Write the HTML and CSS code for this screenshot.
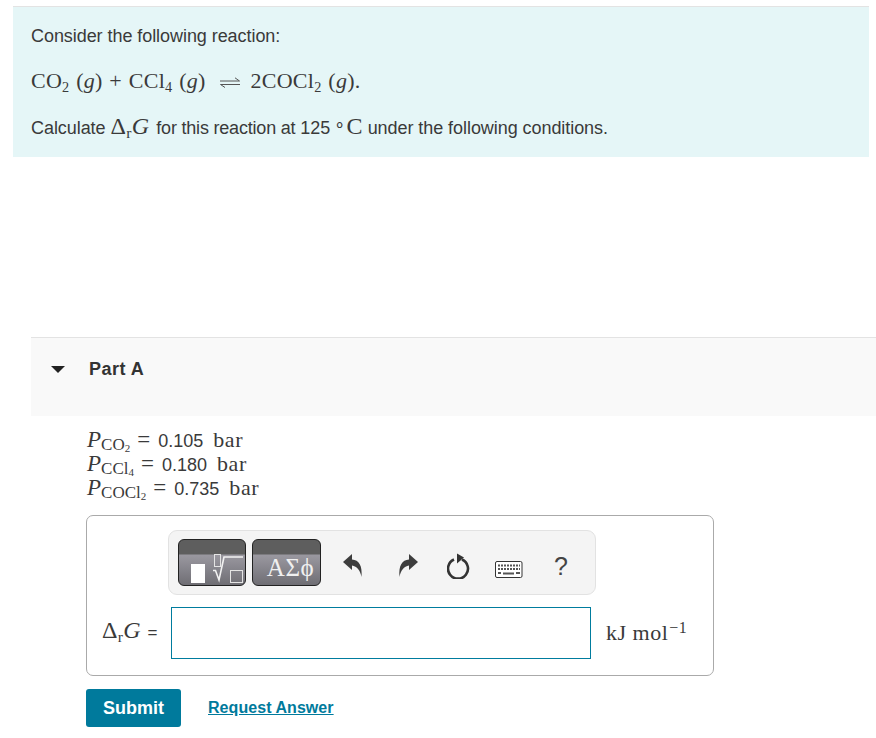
FILE: index.html
```html
<!DOCTYPE html>
<html lang="en">
<head>
<meta charset="utf-8">
<title>Part A</title>
<link rel="stylesheet" href="styles.css">
</head>
<body>
<div class="page">
  <section class="intro">
    <p class="line first">Consider the following reaction:</p>
    <p class="line eq"><span class="m">CO<sub>2</sub> (<i>g</i>) + CCl<sub>4</sub> (<i>g</i>)</span>
      <svg class="equil" width="20" height="11" viewBox="0 0 20 11"><path d="M0 4H19.500L15 .8M20 7.500H.5L5 10.500" fill="none" stroke="#555" stroke-width="1"/></svg>
      <span class="m">2COCl<sub>2</sub> (<i>g</i>).</span></p>
    <p class="line">Calculate <span class="m big delta">Δ<sub>r</sub><i>G</i></span> <span class="tight">for this reaction at</span> 125 <span class="m big"><sup class="deg">∘</sup>C</span> under the following conditions.</p>
  </section>

  <section class="part">
    <header class="part-head">
      <span class="caret"></span>
      <h2>Part A</h2>
    </header>
    <div class="given">
      <div><span class="m p"><i>P</i><sub>CO<sub>2</sub></sub></span> <span class="m eqs">=</span> 0.105 <span class="m unit">bar</span></div>
      <div><span class="m p"><i>P</i><sub>CCl<sub>4</sub></sub></span> <span class="m eqs">=</span> 0.180 <span class="m unit">bar</span></div>
      <div><span class="m p"><i>P</i><sub>COCl<sub>2</sub></sub></span> <span class="m eqs">=</span> 0.735 <span class="m unit">bar</span></div>
    </div>

    <div class="answer">
      <div class="toolbar">
        <button class="tool tool-a" aria-label="Templates">
          <svg width="66" height="32" viewBox="0 0 66 32">
            <rect x="11" y="11" width="14" height="19" fill="#fff"/>
            <rect x="34.500" y="1.500" width="6" height="12" fill="none" stroke="#e4e4e4"/>
            <path d="M33 17.500h2.500l3.500 9.500 5-23h19" fill="none" stroke="#f2f2f2" stroke-width="1.600"/>
            <rect x="50.500" y="17.500" width="12" height="12" fill="none" stroke="#e4e4e4"/>
          </svg>
        </button>
        <button class="tool tool-b"><span class="greek">ΑΣϕ</span></button>
        <svg class="ico undo" width="20" height="24" viewBox="0 0 20 24"><path d="M0 8 9 0v5.500c7 .5 10.500 6 9.500 17.500C17.500 17 14 12 9 11.500V16Z" fill="#3d3d3d"/></svg>
        <svg class="ico redo" width="20" height="24" viewBox="0 0 20 24"><path d="M20 8 11 0v5.500C4 6 .5 11.500 1.500 23 2.500 17 6 12 11 11.500V16Z" fill="#3d3d3d"/></svg>
        <svg class="ico reload" width="24" height="26" viewBox="0 0 24 26"><path d="M7 6.500a10 10 0 1 0 8 0" fill="none" stroke="#333" stroke-width="2.600"/><path d="M9 0v10l7-6z" fill="#333" transform="translate(1 .5)"/></svg>
        <svg class="ico kbd" width="28" height="18" viewBox="0 0 28 18"><rect x=".5" y=".5" width="26.500" height="16" rx="1.500" fill="#fff" stroke="#333"/><path d="M3 4.500h22M3 8h22" stroke="#555" stroke-width="2" stroke-dasharray="2 1"/><path d="M3 12h3M8 12.500h11M21 12h4" stroke="#555" stroke-width="2"/></svg>
        <span class="help">?</span>
      </div>
      <div class="entry">
        <label class="entry-label"><span class="m big delta">Δ<sub>r</sub><i>G</i></span> =</label>
        <div class="field"></div>
        <span class="m units">kJ mol<sup>−1</sup></span>
      </div>
    </div>

    <div class="actions">
      <button class="submit">Submit</button>
      <a class="request" href="#">Request Answer</a>
    </div>
  </section>
</div>
</body>
</html>
```

FILE: styles.css
```css
* { box-sizing: border-box; }
html, body { margin: 0; padding: 0; background: #fff; }
body {
  width: 876px;
  height: 738px;
  overflow: hidden;
  font-family: "Liberation Sans", Arial, sans-serif;
  font-size: 18px;
  color: #3a3a3a;
}
.page { padding: 6px 0 0 13px; }
.m { font-family: "Liberation Serif", "Times New Roman", serif; }
.intro {
  width: 856px;
  height: 151px;
  border-top: 1px solid #e3e3e3;
  background: #e5f6f7;
  padding: 17px 18px 0;
}
.line { margin: 0; height: 24px; line-height: 24px; white-space: nowrap; letter-spacing: -0.06px; }
.eq { margin-top: 21px; font-size: 22px; display: flex; align-items: center; letter-spacing: 0; }
.eq .m { letter-spacing: .25px; word-spacing: 1px; }
.eq .equil { margin: 3px 11px 0 14px; }
.eq + .line { margin-top: 23px; }
sub { font-size: 65%; line-height: 0; vertical-align: -0.25em; }
sup { font-size: 65%; line-height: 0; vertical-align: 0.6em; }
.big { font-size: 24px; letter-spacing: .3px; line-height: 0; }
.delta { margin-right: 2px; }
.tight { letter-spacing: -0.2px; }
.deg { font-size: 18px; vertical-align: 0.25em; margin-right: 1px; margin-left: -1px; }

.part { margin: 180px 0 0 18px; }
.part-head {
  height: 79px;
  border-top: 1px solid #e3e3e3;
  background: #f9f9f9;
  display: flex;
  padding: 19px 0 0 20px;
  gap: 24px;
}
.caret {
  width: 0;
  height: 0;
  margin-top: 9px;
  border-left: 7px solid transparent;
  border-right: 7px solid transparent;
  border-top: 7px solid #222;
}
.part-head h2 { margin: 0; font-size: 18px; line-height: 24px; font-weight: bold; color: #333; letter-spacing: .5px; }

.given { margin: 12px 0 0 56px; font-size: 18px; line-height: 24px; }
.given div { height: 24px; white-space: nowrap; }
.p { font-size: 23px; }
.p sub { font-size: 17px; vertical-align: -0.2em; }
.p sub sub { font-size: 11px; }
.eqs { font-size: 23px; margin: 0 3px 0 2px; }
.unit { font-size: 22px; margin-left: 5px; letter-spacing: .6px; }

.answer {
  width: 628px;
  height: 161px;
  margin: 15px 0 0 55px;
  border: 1px solid #aaa;
  border-radius: 7px;
  padding: 14px 0 0 81px;
}
.toolbar {
  width: 428px;
  height: 65px;
  background: #f4f4f4;
  border: 1px solid #e2e2e2;
  border-radius: 9px;
  display: flex;
  align-items: flex-start;
  padding: 8px 0 0 9px;
}
.tool {
  height: 47px;
  padding: 0;
  border: 1px solid #222;
  border-radius: 6px;
  background: linear-gradient(#5e5e5e 0, #5e5e5e 14px, #9a98a0 15px, #6f6e74 100%);
  overflow: hidden;
  display: block;
}
.tool-a { width: 68px; padding-top: 13px; }
.tool-a svg { display: block; margin-left: 1px; }
.tool-b { width: 69px; margin-left: 6px; padding: 11px 0 0 8px; }
.greek {
  font-family: "Liberation Serif", serif;
  font-size: 25px;
  line-height: 30px;
  color: #f0f0f0;
  letter-spacing: .5px;
}
.ico { display: block; flex: none; }
.undo { margin: 15px 0 0 22px; }
.redo { margin: 15px 0 0 35px; }
.reload { margin: 14px 0 0 29px; }
.kbd { margin: 22px 0 0 24px; }
.help { margin: 12px 0 0 31px; font-size: 25px; line-height: 30px; color: #444; }

.entry { display: flex; align-items: center; margin: 12px 0 0 -66px; }
.entry-label { width: 69px; white-space: nowrap; font-size: 17px; }
.field { width: 420px; height: 52px; border: 1px solid #007c9e; background: #fff; }
.units { margin-left: 15px; font-size: 22px; letter-spacing: .5px; }
.units sup { font-size: 16px; vertical-align: .42em; margin-left: 1px; }

.actions { display: flex; align-items: center; margin: 13px 0 0 55px; gap: 27px; }
.submit {
  width: 95px;
  height: 38px;
  padding: 0;
  border: 0;
  border-radius: 3px;
  background: #007a9c;
  color: #fff;
  font: bold 18px "Liberation Sans", Arial, sans-serif;
}
.request { color: #007a9c; font-weight: bold; font-size: 16px; text-decoration: underline; letter-spacing: .06px; }
```
